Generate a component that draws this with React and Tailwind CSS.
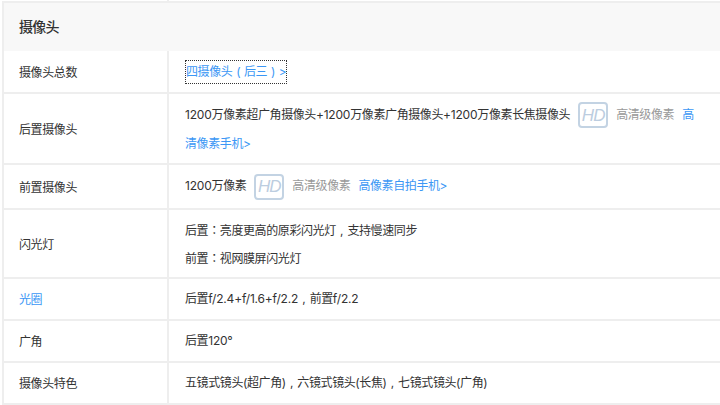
const Tc = ({ children }) => <span className="font-['Noto_Sans_CJK_TC',sans-serif]">{children}</span>

const Paren = ({ children }) => <span className="inline-block w-[11.6px] text-center">{children}</span>

// digits and latin run a little wider than the cjk text around them
const Num = ({ children }) => <span className="tracking-[-0.2px]">{children}</span>

function HdIcon() {
  return (
    <span className="inline-flex align-middle items-center justify-center w-[30px] h-[26px] mx-2 border-2 border-[#c3d3e3] rounded-[4px] text-[#bccde0] italic text-[17px] tracking-[-1px] leading-none font-['Liberation_Sans',sans-serif]">
      HD
    </span>
  )
}

const rows = [
  {
    label: '摄像头总数',
    h: 'h-[41px]',
    body: (
      <span className="inline-block h-[24px] leading-[22px] text-[#3b97f5] border border-dotted border-[#333] mt-[1px]">
        四摄像头<Paren>(</Paren>后三<Paren>)</Paren>&gt;
      </span>
    ),
  },
  {
    label: '后置摄像头',
    h: 'h-[71px]',
    body: (
      <div className="leading-[29px]">
        <Num>1200</Num>万像素超广角摄像头<Num>+1200</Num>万像素广角摄像头<Num>+1200</Num>万像素长焦摄像头
        <HdIcon />
        <span className="text-[#999]">高清级像素</span>
        <span className="text-[#3b97f5] ml-2">高</span>
        <br />
        <span className="text-[#3b97f5]">清像素手机&gt;</span>
      </div>
    ),
  },
  {
    label: '前置摄像头',
    h: 'h-[45px]',
    body: (
      <div>
        <Num>1200</Num>万像素
        <HdIcon />
        <span className="text-[#999]">高清级像素</span>
        <span className="text-[#3b97f5] ml-2">高像素自拍手机&gt;</span>
      </div>
    ),
  },
  {
    label: '闪光灯',
    h: 'h-[69px]',
    body: (
      <div className="leading-[27px]">
        <div>后置<Tc>：</Tc>亮度更高的原彩闪光灯<Paren>,</Paren>支持慢速同步</div>
        <div>前置<Tc>：</Tc>视网膜屏闪光灯</div>
      </div>
    ),
  },
  { label: '光圈', link: true, h: 'h-[42px]', body: <div>后置<Num>f/2.4+f/1.6+f/2.2</Num><Paren>,</Paren>前置<Num>f/2.2</Num></div> },
  { label: '广角', h: 'h-[42px]', body: <div>后置<Num>120°</Num></div> },
  { label: '摄像头特色', h: 'h-[42px]', body: <div>五镜式镜头(超广角)<Paren>,</Paren>六镜式镜头(长焦)<Paren>,</Paren>七镜式镜头(广角)</div> },
]

const App = () => {
  return (
    <div className="w-[720px] h-[405px] bg-white overflow-hidden pl-[2px] text-[#333] text-[12px] tracking-[-0.4px] font-['Inter','Noto_Sans_CJK_SC',sans-serif]">
      <div className="h-[1px] ml-[165px] w-[2px] bg-[#eee]"></div>
      <div className="border-t-2 border-b-2 border-l-2 border-[#eee]">
        <div className="h-[48px] bg-[#f8f8f8] flex items-center pl-[15px] pb-[2px] text-[14px] tracking-[-0.8px] font-medium text-[#333]">摄像头</div>
        {rows.map((row, i) => (
          <div key={i} className={`flex ${row.h} ${i > 0 ? 'border-t-2 border-[#eee]' : ''}`}>
            <div className={`w-[165px] shrink-0 pl-[15px] pt-[2px] flex items-center border-r-2 border-[#eee] ${row.link ? 'text-[#3b97f5]' : ''}`}>{row.label}</div>
            <div className="flex-1 pl-[16px] pr-[20px] flex items-center">{row.body}</div>
          </div>
        ))}
      </div>
    </div>
  )
}

export default App
